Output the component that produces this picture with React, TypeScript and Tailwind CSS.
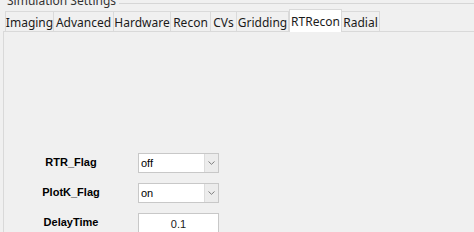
const tabs = [
  { name: "Imaging", w: 49 },
  { name: "Advanced", w: 60 },
  { name: "Hardware", w: 57 },
  { name: "Recon", w: 40 },
  { name: "CVs", w: 26 },
  { name: "Gridding", w: 52 },
  { name: "RTRecon", w: 53 },
  { name: "Radial", w: 38 },
];

function Combo({ value }: { value: string }) {
  return (
    <div className="flex h-[20px] w-[81px] border border-[#c8c8c8] bg-white">
      <span className="flex-1 pl-[2px] text-[11px] leading-[18px] text-black">{value}</span>
      <span className="flex w-[14px] items-center justify-center border-l border-[#dcdcdc] bg-[#ececec]">
        <svg width="7" height="4" viewBox="0 0 7 4" fill="none">
          <path d="M0.5 0.5 L3.5 3.3 L6.5 0.5" stroke="#7d7d7d" strokeWidth="1" />
        </svg>
      </span>
    </div>
  );
}

function Row({ label, children }: { label: string; children: React.ReactNode }) {
  return (
    <div className="flex h-[30px] items-start">
      <div className="w-[134px] pt-[2px] text-center text-[11px] font-bold leading-[14px] text-black">{label}</div>
      {children}
    </div>
  );
}

export default function App() {
  return (
    <div
      className="flex h-[232px] w-[474px] flex-col overflow-hidden bg-[#f0f0f0] text-[#1a1a1a]"
      style={{ fontFamily: '"Liberation Sans", Arial, sans-serif' }}
    >
      <div className="flex h-[11px] items-start">
        <span
          className="-mt-[7px] ml-[7px] text-[12px] leading-[16px] text-[#333]"
          style={{ fontFamily: '"Noto Sans", "Open Sans", sans-serif' }}
        >
          Simulation Settings
        </span>
        <div className="ml-[3px] mt-[3px] h-px flex-1 bg-[#d6d6d6]" />
      </div>

      <div
        className="flex h-[22px] items-end pl-[5px] text-[12px]"
        style={{ fontFamily: '"Noto Sans", "Open Sans", sans-serif' }}
      >
        {tabs.map((t) =>
          t.name === "RTRecon" ? (
            <div
              key={t.name}
              className="relative z-10 -mb-px flex h-[23px] items-center justify-center border border-b-0 border-[#d9d9d9] bg-white pt-[2px]"
              style={{ width: t.w }}
            >
              {t.name}
            </div>
          ) : (
            <div
              key={t.name}
              className="flex h-[20px] items-center justify-center border border-b-0 border-l-0 border-[#dadada] bg-[#f0f0f0] pt-[3px] first:border-l"
              style={{ width: t.w }}
            >
              {t.name}
            </div>
          )
        )}
      </div>

      <div className="ml-[3px] flex-1 border-l border-t border-[#d9d9d9] bg-[#f0f0f0] pt-[121px]">
        <Row label="RTR_Flag">
          <Combo value="off" />
        </Row>
        <Row label="PlotK_Flag">
          <Combo value="on" />
        </Row>
        <Row label="DelayTime">
          <div className="flex h-[22px] w-[81px] items-center justify-center border border-[#c8c8c8] bg-white text-[11px]">
            0.1
          </div>
        </Row>
      </div>
    </div>
  );
}
